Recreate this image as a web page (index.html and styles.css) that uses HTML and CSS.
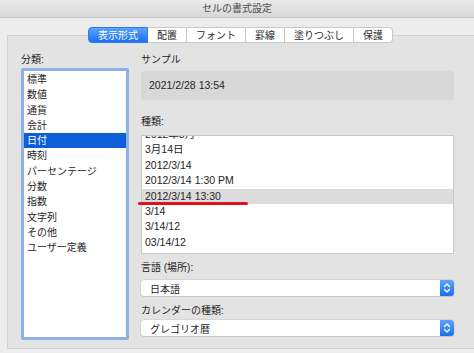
FILE: index.html
```html
<!DOCTYPE html>
<html lang="ja">
<head>
  <meta charset="UTF-8" />
  <meta name="viewport" content="width=device-width, initial-scale=1.0" />
  <title>セルの書式設定</title>
  <link rel="stylesheet" href="styles.css">
</head>
<body>
  <div class="window">
    <div class="titlebar">セルの書式設定</div>

    <div class="content">
      <div class="tabs">
        <span class="tab active">表示形式</span>
        <span class="tab">配置</span>
        <span class="tab">フォント</span>
        <span class="tab">罫線</span>
        <span class="tab">塗りつぶし</span>
        <span class="tab">保護</span>
      </div>

      <div class="panel">
        <div class="col-left">
          <div class="label">分類:</div>
          <ul class="category-list">
            <li>標準</li>
            <li>数値</li>
            <li>通貨</li>
            <li>会計</li>
            <li class="selected">日付</li>
            <li>時刻</li>
            <li>パーセンテージ</li>
            <li>分数</li>
            <li>指数</li>
            <li>文字列</li>
            <li>その他</li>
            <li>ユーザー定義</li>
          </ul>
        </div>

        <div class="col-right">
          <div class="label">サンプル</div>
          <div class="sample">2021/2/28 13:54</div>

          <div class="label label-type">種類:</div>
          <div class="type-list">
            <ul class="type-items">
              <li>2012年3月</li>
              <li>3月14日</li>
              <li>2012/3/14</li>
              <li>2012/3/14 1:30 PM</li>
              <li class="current">2012/3/14 13:30</li>
              <li>3/14</li>
              <li>3/14/12</li>
              <li>03/14/12</li>
            </ul>
            <span class="mark"></span>
          </div>

          <div class="label label-lang">言語 (場所):</div>
          <div class="select select-lang">
            <span>日本語</span>
            <span class="stepper">
              <svg width="14" height="16" viewBox="0 0 14 16">
                <path d="M4.5 6.5 L7 4 L9.5 6.5" fill="none" stroke="#fff" stroke-width="1.4" stroke-linecap="round" stroke-linejoin="round"/>
                <path d="M4.5 9.5 L7 12 L9.5 9.5" fill="none" stroke="#fff" stroke-width="1.4" stroke-linecap="round" stroke-linejoin="round"/>
              </svg>
            </span>
          </div>

          <div class="label label-cal">カレンダーの種類:</div>
          <div class="select select-cal">
            <span>グレゴリオ暦</span>
            <span class="stepper">
              <svg width="14" height="16" viewBox="0 0 14 16">
                <path d="M4.5 6.5 L7 4 L9.5 6.5" fill="none" stroke="#fff" stroke-width="1.4" stroke-linecap="round" stroke-linejoin="round"/>
                <path d="M4.5 9.5 L7 12 L9.5 9.5" fill="none" stroke="#fff" stroke-width="1.4" stroke-linecap="round" stroke-linejoin="round"/>
              </svg>
            </span>
          </div>
        </div>
      </div>
    </div>
  </div>
</body>
</html>
```

FILE: styles.css
```css
:root {
  --window-bg: #ececec;
  --panel-bg: #e3e3e3;
  --text-color: #242424;
  --select-blue: #0c5fd8;
  --focus-ring: #8eb0ea;
}

* {
  box-sizing: border-box;
  margin: 0;
  padding: 0;
}

body {
  width: 474px;
  height: 353px;
  overflow: hidden;
  background: var(--window-bg);
  font-family: "Liberation Sans", "Noto Sans CJK JP", sans-serif;
  color: var(--text-color);
}

.titlebar {
  height: 18px;
  line-height: 17px;
  text-align: center;
  font-size: 10px;
  color: #4a4a4a;
  background: linear-gradient(to bottom, #ebebeb, #d7d7d7);
  border-bottom: 1px solid #c4c4c4;
}

.content {
  padding-top: 9px;
}

.tabs {
  position: relative;
  z-index: 1;
  display: flex;
  justify-content: center;
  margin-left: 7px;
  height: 16px;
}

.tab {
  height: 16px;
  line-height: 15px;
  padding: 0 9px;
  font-size: 10px;
  background: #fff;
  border: 1px solid #c8c8c8;
  border-left: none;
  color: #2a2a2a;
}

.tab:first-child {
  border-left: 1px solid #c8c8c8;
  border-radius: 4px 0 0 4px;
}

.tab:last-child {
  border-radius: 0 4px 4px 0;
}

.tab.active {
  color: #fff;
  border-color: #2a7af0;
  background: linear-gradient(to bottom, #5aa3fa, #1c6ff1);
}

.panel {
  display: flex;
  gap: 12px;
  margin: -8px 0 0 7px;
  padding: 17px 20px 8px 13px;
  background: var(--panel-bg);
  border: 1px solid #d3d3d3;
  border-right: none;
}

.label {
  font-size: 10px;
  line-height: 14px;
  color: #262626;
}

.col-left {
  width: 108px;
}

.category-list {
  list-style: none;
  margin-top: 1px;
  height: 272px;
  padding-top: 1px;
  background: #fff;
  border: 3px solid var(--focus-ring);
  border-radius: 2px;
  font-size: 10px;
}

.category-list li {
  height: 15.3px;
  line-height: 15.3px;
  padding-left: 3px;
}

.category-list li.selected {
  background: var(--select-blue);
  color: #fff;
}

.col-right {
  width: 313px;
}

.sample {
  margin-top: 4px;
  height: 29px;
  line-height: 29px;
  padding-left: 8px;
  font-size: 10.5px;
  background: #d8d8d8;
  border-radius: 3px;
}

.label-type {
  margin-top: 15px;
}

.type-list {
  position: relative;
  margin-top: 6px;
  height: 119px;
  background: #fff;
  border: 1px solid #c7c7c7;
}

.type-items {
  list-style: none;
  height: 117px;
  overflow: hidden;
  font-size: 10.5px;
}

.type-items li {
  height: 15.4px;
  line-height: 15.4px;
  padding-left: 3px;
}

.type-items li:first-child {
  margin-top: -9px;
}

.type-items li.current {
  background: #dcdcdc;
}

.mark {
  position: absolute;
  left: -4px;
  top: 66px;
  width: 110px;
  height: 3px;
  border-radius: 2px;
  background: #e3101b;
}

.label-lang {
  margin-top: 7px;
}

.select {
  display: flex;
  align-items: center;
  justify-content: space-between;
  height: 16px;
  padding-left: 9px;
  font-size: 10px;
  background: #fff;
  border-radius: 3px;
  box-shadow: 0 0 0 0.5px #c9c9c9, 0 1px 1px rgba(0, 0, 0, 0.12);
}

.select-lang {
  margin-top: 5px;
}

.label-cal {
  margin-top: 8px;
}

.select-cal {
  margin-top: 2px;
}

.stepper {
  display: flex;
  width: 14px;
  height: 16px;
  border-radius: 0 3px 3px 0;
  background: linear-gradient(to bottom, #5da5fa, #1b6ef0);
}
```
